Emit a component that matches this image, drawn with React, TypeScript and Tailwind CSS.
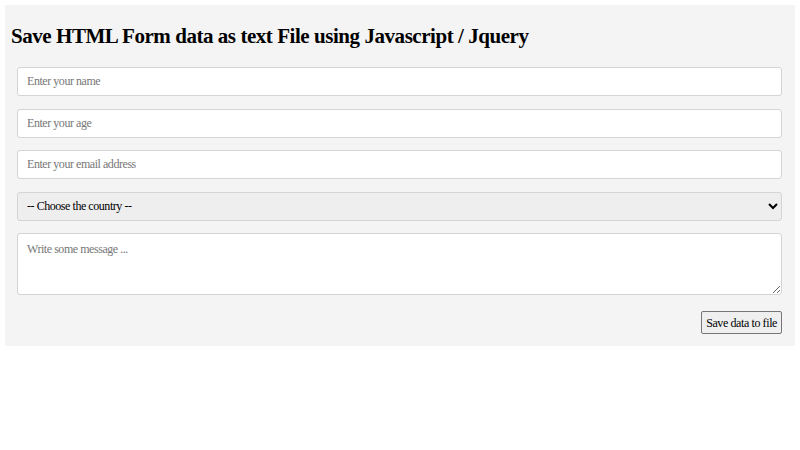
const fieldClass =
  "block w-full h-[29px] px-[9px] border border-[#d4d4d4] rounded-[3px] bg-white text-[12px] tracking-[-0.45px] text-black placeholder:text-[#777] outline-none";

export default function App() {
  return (
    <div className="min-h-[450px] bg-white" style={{ fontFamily: '"Liberation Serif", "Times New Roman", serif' }}>
      <div className="mx-[5px] mt-[5px] bg-[#f4f4f4] pt-[17px] pb-[12px]">
        <h2 className="pl-[6px] text-[21px] tracking-[-0.45px] font-bold leading-[28px] text-black">
          Save HTML Form data as text File using Javascript / Jquery
        </h2>
        <form className="mt-[17px] pl-[12px] pr-[13px] flex flex-col gap-[12.5px]">
          <input className={fieldClass} placeholder="Enter your name" />
          <input className={fieldClass} placeholder="Enter your age" />
          <input className={fieldClass} placeholder="Enter your email address" />
          <select
            className="block w-full h-[29px] pl-[5px] border border-[#d4d4d4] rounded-[3px] bg-[#eeeeee] text-[12px] tracking-[-0.45px] text-black outline-none"
            defaultValue=""
          >
            <option value="">-- Choose the country --</option>
          </select>
          <textarea
            className="block w-full h-[62px] px-[9px] pt-[6px] pb-[7px] border border-[#d4d4d4] rounded-[3px] bg-white text-[12px] tracking-[-0.45px] text-black placeholder:text-[#777] outline-none"
            placeholder="Write some message ..."
          />
          <div className="flex justify-end mt-[3.5px]">
            <button
              type="button"
              className="h-[23px] px-[4px] border border-[#767676] rounded-[2px] bg-[#efefef] text-[12px] tracking-[-0.4px] text-black"
            >
              Save data to file
            </button>
          </div>
        </form>
      </div>
    </div>
  );
}
